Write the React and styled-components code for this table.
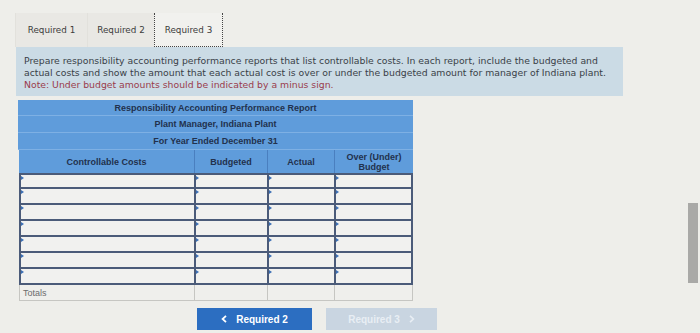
import React from "react";
import styled, { createGlobalStyle } from "styled-components";

const Global = createGlobalStyle`
  html, body { margin: 0; padding: 0; }
  body {
    background: #eeeeea;
    width: 700px;
    height: 333px;
    overflow: hidden;
    font-family: "Liberation Sans", Arial, sans-serif;
  }
`;

const Page = styled.div`
  position: relative;
  width: 700px;
  height: 333px;
  padding-top: 13px;
  box-sizing: border-box;
`;

const Tabs = styled.div`
  display: flex;
  margin-left: 15px;
  height: 34px;
`;

const Tab = styled.div`
  width: ${(p) => p.w}px;
  box-sizing: border-box;
  display: flex;
  align-items: center;
  justify-content: center;
  font-family: "DejaVu Sans", Verdana, sans-serif;
  font-size: 8.8px;
  color: #3c3c3c;
  background: ${(p) => (p.active ? "#f1f1ee" : "#e9e8e4")};
  border-left: ${(p) => (p.active ? "1px dotted #444" : "1px solid #e2e1dc")};
  border-right: ${(p) => (p.active ? "1px dotted #444" : "none")};
  border-bottom: ${(p) => (p.active ? "1px dotted #444" : "none")};
`;

const Prompt = styled.div`
  margin-left: 16px;
  width: 607px;
  height: 49px;
  box-sizing: border-box;
  background: #cbdbe5;
  padding: 8px 0 0 8px;
  font-family: "DejaVu Sans", Verdana, sans-serif;
  font-size: 9.3px;
  line-height: 11.8px;
  white-space: nowrap;
  color: #3a3f48;
`;

const Line = styled.div`
  color: ${(p) => (p.note ? "#9a3b4c" : "inherit")};
`;

const Report = styled.div`
  margin: 4px 0 0 18px;
  width: 395px;
`;

const TitleRow = styled.div`
  height: ${(p) => p.h}px;
  box-sizing: border-box;
  background: #5f9cdb;
  border-bottom: 1px solid #7eb0e4;
  display: flex;
  align-items: center;
  justify-content: center;
  font-size: 9px;
  font-weight: bold;
  color: #22314d;
`;

const Grid = styled.div`
  display: grid;
  grid-template-columns: 175px 73px 67px 79px;
  margin-left: 1px;
`;

const HeadCell = styled.div`
  height: 23px;
  box-sizing: border-box;
  background: #5f9cdb;
  border-left: ${(p) => (p.first ? "none" : "1px solid #4a7fbf")};
  display: flex;
  align-items: center;
  justify-content: center;
  text-align: center;
  font-size: 9px;
  line-height: 10px;
  font-weight: bold;
  color: #22314d;
`;

const Cell = styled.div`
  position: relative;
  height: 16px;
  box-sizing: border-box;
  background: #f1f1ef;
  border-left: 2px solid #4b5b79;
  border-bottom: 2px solid #4b5b79;
  border-right: ${(p) => (p.last ? "2px solid #4b5b79" : "none")};
  border-top: ${(p) => (p.top ? "2px solid #4b5b79" : "none")};

  &::before {
    content: "";
    position: absolute;
    left: 0;
    top: 1px;
    border-top: 2px solid transparent;
    border-bottom: 2px solid transparent;
    border-left: 3px solid #3b6fb4;
  }
`;

const TotalCell = styled.div`
  height: 16px;
  box-sizing: border-box;
  background: #efefec;
  border-left: 1px solid #c6c6c2;
  border-bottom: 1px solid #c6c6c2;
  border-right: ${(p) => (p.last ? "1px solid #c6c6c2" : "none")};
  padding: 3px 0 0 3px;
  font-size: 9px;
  color: #6c6c6c;
`;

const Nav = styled.div`
  display: flex;
  gap: 14px;
  margin: 7px 0 0 197px;
`;

const NavButton = styled.div`
  width: ${(p) => p.w}px;
  height: 22px;
  box-sizing: border-box;
  display: flex;
  align-items: center;
  justify-content: center;
  gap: 9px;
  background: ${(p) => (p.disabled ? "#c9d5e1" : "#2c6ec1")};
  color: ${(p) => (p.disabled ? "#e8eef4" : "#ffffff")};
  font-size: 10px;
  font-weight: bold;
`;

const Chevron = styled.svg`
  width: 6px;
  height: 8px;
`;

const ScrollThumb = styled.div`
  position: absolute;
  right: 2px;
  top: 203px;
  width: 10px;
  height: 80px;
  background: #a9a9a7;
`;

const columns = [
  { label: "Controllable Costs" },
  { label: "Budgeted" },
  { label: "Actual" },
  { label: "Over (Under)", sub: "Budget" },
];

const rows = Array.from({ length: 7 }, (_, i) => i);

const Left = () => (
  <Chevron viewBox="0 0 6 8">
    <path d="M5 0.8 L1.6 4 L5 7.2" fill="none" stroke="currentColor" strokeWidth="1.8" />
  </Chevron>
);

const Right = () => (
  <Chevron viewBox="0 0 6 8">
    <path d="M1 0.8 L4.4 4 L1 7.2" fill="none" stroke="currentColor" strokeWidth="1.6" />
  </Chevron>
);

export default function App() {
  return (
    <>
      <Global />
      <Page>
        <Tabs>
          <Tab w={72}>Required 1</Tab>
          <Tab w={67}>Required 2</Tab>
          <Tab w={69} active>Required 3</Tab>
        </Tabs>
        <Prompt>
          <Line>
            Prepare responsibility accounting performance reports that list controllable costs. In each report, include the budgeted and
          </Line>
          <Line>
            actual costs and show the amount that each actual cost is over or under the budgeted amount for manager of Indiana plant.
          </Line>
          <Line note>Note: Under budget amounts should be indicated by a minus sign.</Line>
        </Prompt>
        <Report>
          <TitleRow h={16}>Responsibility Accounting Performance Report</TitleRow>
          <TitleRow h={17}>Plant Manager, Indiana Plant</TitleRow>
          <TitleRow h={17}>For Year Ended December 31</TitleRow>
          <Grid>
            {columns.map((c, i) => (
              <HeadCell key={c.label} first={i === 0}>
                <div>
                  {c.label}
                  {c.sub && <br />}
                  {c.sub}
                </div>
              </HeadCell>
            ))}
            {rows.map((r) =>
              columns.map((c, i) => (
                <Cell key={`${r}-${i}`} top={r === 0} last={i === 3} />
              ))
            )}
            <TotalCell>Totals</TotalCell>
            <TotalCell />
            <TotalCell />
            <TotalCell last />
          </Grid>
        </Report>
        <Nav>
          <NavButton w={115}>
            <Left />
            Required 2
          </NavButton>
          <NavButton w={111} disabled>
            Required 3
            <Right />
          </NavButton>
        </Nav>
        <ScrollThumb />
      </Page>
    </>
  );
}
